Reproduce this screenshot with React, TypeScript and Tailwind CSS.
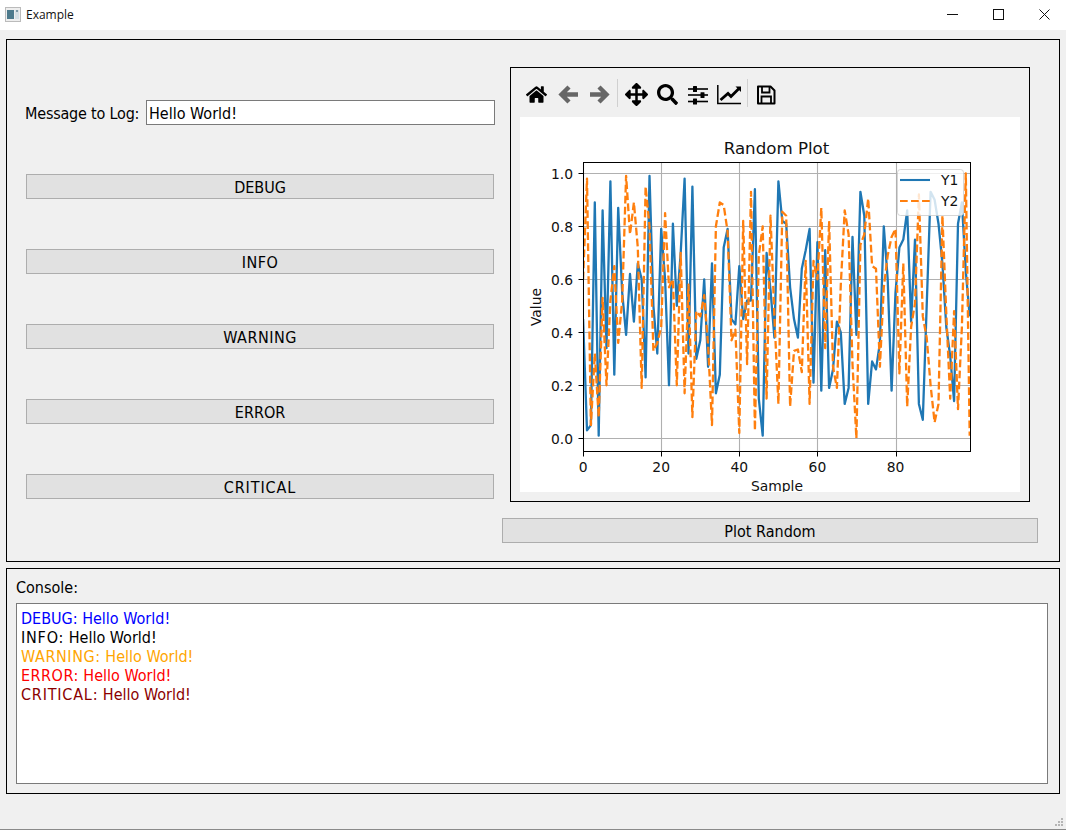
import React from "react";
import { FaHome, FaArrowsAlt, FaSearch } from "react-icons/fa";

const y1 = [0.45,0.03,0.05,0.89,0.01,0.86,0.34,0.97,0.24,0.87,0.55,0.39,0.62,0.44,0.66,0.6,0.23,0.99,0.5,0.32,0.79,0.6,0.2,0.81,0.5,0.7,0.98,0.32,0.95,0.3,0.37,0.6,0.27,0.66,0.17,0.24,0.72,0.79,0.45,0.43,0.65,0.45,0.52,0.52,0.94,0.15,0.01,0.7,0.56,0.38,0.97,0.82,0.81,0.57,0.45,0.38,0.64,0.71,0.79,0.21,0.74,0.18,0.71,0.19,0.26,0.44,0.4,0.13,0.19,0.76,0.39,0.93,0.84,0.13,0.29,0.26,0.36,0.8,0.6,0.18,0.55,0.72,0.75,0.86,0.44,0.75,0.13,0.07,0.5,0.93,0.9,0.81,0.66,0.42,0.31,0.14,0.81,0.89,0.63,0.46];
const y2 = [0.6,0.98,0.05,0.32,0.08,0.53,0.2,0.52,0.65,0.36,0.52,0.99,0.77,0.89,0.72,0.19,0.95,0.8,0.33,0.36,0.42,0.85,0.57,0.6,0.2,0.7,0.17,0.58,0.08,0.48,0.46,0.54,0.35,0.05,0.8,0.89,0.88,0.78,0.37,0.41,0.02,0.82,0.28,0.93,0.03,0.69,0.8,0.15,0.84,0.46,0.13,0.855,0.84,0.12,0.33,0.335,0.25,0.67,0.13,0.67,0.6,0.87,0.34,0.82,0.27,0.19,0.58,0.86,0.77,0.28,0.0,0.73,0.77,0.905,0.65,0.64,0.27,0.57,0.69,0.76,0.79,0.245,0.66,0.12,0.42,0.51,0.92,0.46,0.38,0.2,0.06,0.13,0.84,0.47,0.15,0.48,0.11,0.42,1.0,0.01];

const px = (i: number) => 63.1 + 3.905 * i;
const py = (v: number) => 321.3 - 265 * v;
const pts = (a: number[]) => a.map((v, i) => `${px(i).toFixed(1)},${py(v).toFixed(1)}`).join(" ");

function Plot() {
  const xt = [0, 20, 40, 60, 80];
  const yt = [0, 0.2, 0.4, 0.6, 0.8, 1];
  return (
    <svg width="500" height="375" viewBox="0 0 500 375" className="block" style={{ fontFamily: '"DejaVu Sans", sans-serif' }}>
      <defs>
        <clipPath id="ax"><rect x="63.5" y="45.5" width="387" height="289" /></clipPath>
      </defs>
      <rect width="500" height="375" fill="#fff" />
      <text x="256.5" y="37" fontSize="16.67" textAnchor="middle" fill="#111">Random Plot</text>
      {xt.map((t) => (
        <g key={t}>
          <line x1={Math.round(px(t)) + 0.5} x2={Math.round(px(t)) + 0.5} y1="45.5" y2="334.5" stroke="#b0b0b0" strokeWidth="1.1" />
          <line x1={Math.round(px(t)) + 0.5} x2={Math.round(px(t)) + 0.5} y1="334.5" y2="339.5" stroke="#000" strokeWidth="1" />
          <text x={px(t)} y="355" fontSize="13.89" textAnchor="middle" fill="#111">{t}</text>
        </g>
      ))}
      {yt.map((t) => (
        <g key={t}>
          <line x1="63.5" x2="450.5" y1={Math.round(py(t)) + 0.5} y2={Math.round(py(t)) + 0.5} stroke="#b0b0b0" strokeWidth="1.1" />
          <line x1="58.5" x2="63.5" y1={Math.round(py(t)) + 0.5} y2={Math.round(py(t)) + 0.5} stroke="#000" strokeWidth="1" />
          <text x="53" y={py(t) + 5.5} fontSize="13.89" textAnchor="end" fill="#111">{t.toFixed(1)}</text>
        </g>
      ))}
      <g clipPath="url(#ax)">
        <polyline points={pts(y1)} fill="none" stroke="#1f77b4" strokeWidth="2.3" strokeLinejoin="round" />
        <polyline points={pts(y2)} fill="none" stroke="#ff7f0e" strokeWidth="2.3" strokeDasharray="7.7 3.33" strokeLinejoin="round" />
      </g>
      <rect x="63.5" y="45.5" width="387" height="289" fill="none" stroke="#000" strokeWidth="1" />
      <rect x="377.5" y="52.5" width="66" height="46" rx="3" fill="#fff" fillOpacity="0.8" stroke="#ccc" strokeOpacity="0.8" strokeWidth="1" />
      <line x1="380" x2="410" y1="63" y2="63" stroke="#1f77b4" strokeWidth="2.08" />
      <line x1="380" x2="410" y1="84" y2="84" stroke="#ff7f0e" strokeWidth="2.08" strokeDasharray="7.7 3.33" />
      <text x="421" y="68" fontSize="13.89" fill="#111">Y1</text>
      <text x="421" y="89" fontSize="13.89" fill="#111">Y2</text>
      <text x="257" y="374" fontSize="13.89" textAnchor="middle" fill="#111">Sample</text>
      <text transform="translate(21 190) rotate(-90)" fontSize="13.89" textAnchor="middle" fill="#111">Value</text>
    </svg>
  );
}

function Btn({ label, className = "", labelClass = "" }: { label: string; className?: string; labelClass?: string }) {
  return (
    <button className={`h-[25px] border border-[#adadad] bg-[#e1e1e1] text-[16px] leading-[25px] text-black text-center ${className}`}>
      <span className={labelClass}>{label}</span>
    </button>
  );
}

function Tool({ children }: { children: React.ReactNode }) {
  return <div className="w-[31px] h-[31px] flex items-center justify-center">{children}</div>;
}

const font = { fontFamily: '"DejaVu Sans Condensed", "DejaVu Sans", sans-serif' };

export default function App() {
  return (
    <div className="w-[1066px] h-[830px] bg-[#f0f0f0] flex flex-col overflow-hidden text-black" style={font}>
      <div className="h-[30px] bg-white flex items-center shrink-0">
        <svg width="16" height="16" viewBox="0 0 16 16" className="ml-[5px]">
          <rect x="0.5" y="0.5" width="15" height="14" fill="#eee" stroke="#bbb" />
          <rect x="2" y="3" width="7" height="9" fill="#4d7a8c" />
          <rect x="10" y="3" width="4" height="9" fill="#d5dfe4" />
          <rect x="11" y="3" width="2" height="2" fill="#7d98a5" />
        </svg>
        <span className="ml-[5px] text-[12px] text-[#111]" style={{ fontFamily: '"Open Sans", sans-serif' }}>Example</span>
        <div className="ml-auto mr-[-1px] flex items-center pb-[1px]">
          <div className="w-[46px] h-[29px] flex items-center justify-center">
            <svg width="11" height="11" viewBox="0 0 11 11"><line x1="0" x2="11" y1="5.5" y2="5.5" stroke="#111" /></svg>
          </div>
          <div className="w-[46px] h-[29px] flex items-center justify-center">
            <svg width="11" height="11" viewBox="0 0 11 11"><rect x="0.5" y="0.5" width="10" height="10" fill="none" stroke="#111" /></svg>
          </div>
          <div className="w-[46px] h-[29px] flex items-center justify-center">
            <svg width="11" height="11" viewBox="0 0 11 11"><path d="M0.5 0.5L10.5 10.5M10.5 0.5L0.5 10.5" fill="none" stroke="#111" /></svg>
          </div>
        </div>
      </div>

      <div className="px-[6px] pt-[9px] flex flex-col gap-[6px]">
        <div className="h-[523px] border border-black flex">
          <div className="w-[495px] shrink-0 pt-[60px] pl-[18px] flex flex-col">
            <div className="flex items-center h-[25px]">
              <span className="text-[16px] leading-[25px] pt-[2px] w-[121px] shrink-0 tracking-[-0.2px]">Message to Log:</span>
              <input readOnly value="Hello World!" className="w-[349px] h-[25px] border border-[#7a7a7a] bg-white px-[2px] pt-[2px] text-[16px] text-black outline-none" />
            </div>
            <div className="mt-[49px] ml-[1px] flex flex-col gap-[50px] w-[468px]">
              <Btn label="DEBUG" />
              <Btn label="INFO" labelClass="tracking-[0.5px]" />
              <Btn label="WARNING" labelClass="tracking-[0.5px]" />
              <Btn label="ERROR" />
              <Btn label="CRITICAL" labelClass="tracking-[0.9px]" />
            </div>
          </div>
          <div className="flex flex-col pt-[27px]">
            <div className="ml-[8px] w-[520px] h-[435px] border border-black flex flex-col">
              <div className="h-[49px] pl-[11px] pt-[11px] flex items-start shrink-0">
                <Tool><FaHome size={21} color="#000" className="-translate-x-[1px]" /></Tool>
                <Tool>
                  <svg width="21" height="21" viewBox="0 0 21 21">
                    <path d="M11 3L3.5 10.5L11 18M5 10.5H20" fill="none" stroke="#666" strokeWidth="4.4" />
                  </svg>
                </Tool>
                <Tool>
                  <svg width="21" height="21" viewBox="0 0 21 21">
                    <path d="M10 3L17.5 10.5L10 18M16 10.5H1" fill="none" stroke="#666" strokeWidth="4.4" />
                  </svg>
                </Tool>
                <div className="w-[6px] h-[31px] pl-[2px]"><div className="w-px h-[28px] bg-[#d0d0d0]" /></div>
                <Tool><FaArrowsAlt size={23} color="#000" /></Tool>
                <Tool><FaSearch size={21} color="#000" /></Tool>
                <Tool>
                  <svg width="22" height="20" viewBox="0 0 22 20" className="-translate-x-[1px]">
                    <g fill="#000">
                      <rect x="1" y="3.2" width="20" height="1.6" />
                      <rect x="1" y="9.2" width="20" height="1.6" />
                      <rect x="1" y="15.7" width="20" height="1.6" />
                      <rect x="6" y="1" width="4" height="6" rx="0.5" />
                      <rect x="13.5" y="7.3" width="4" height="5.6" rx="0.5" />
                      <rect x="6" y="13.5" width="4" height="6" rx="0.5" />
                    </g>
                  </svg>
                </Tool>
                <Tool>
                  <svg width="24" height="21" viewBox="0 0 24 21" className="-translate-x-[1px]">
                    <path d="M0.8 1V19.5H24" fill="none" stroke="#000" strokeWidth="1.5" />
                    <path d="M3.5 16L11 9.5L14 12.5L22 4.5" fill="none" stroke="#000" strokeWidth="2.8" />
                    <path d="M18.5 2.5H24V8Z" fill="#000" />
                  </svg>
                </Tool>
                <div className="w-[7px] h-[31px] pl-[2px]"><div className="w-px h-[28px] bg-[#d0d0d0]" /></div>
                <Tool>
                  <svg width="20" height="20" viewBox="0 0 20 20" className="-translate-x-[2px]">
                    <path d="M2 1.5H14.5L18.5 5.5V18.5H2Z" fill="none" stroke="#000" strokeWidth="2" strokeLinejoin="round" />
                    <path d="M6 2V7.5H13.5V2" fill="none" stroke="#000" strokeWidth="1.8" />
                    <path d="M5.5 18V11.5H15V18" fill="none" stroke="#000" strokeWidth="1.8" />
                  </svg>
                </Tool>
              </div>
              <div className="ml-[9px]"><Plot /></div>
            </div>
            <Btn label="Plot Random" className="mt-[16px] w-[536px]" />
          </div>
        </div>

        <div className="h-[226px] border border-black px-[9px] flex flex-col">
          <div className="h-[34px] text-[16px] leading-[38px] shrink-0">Console:</div>
          <div className="w-[1032px] h-[181px] border border-[#7a7a7a] bg-white px-[4px] pt-[5px] text-[16px] leading-[19px]">
            <div className="text-[#0000ff]">DEBUG: Hello World!</div>
            <div className="text-black"><span className="tracking-[0.8px]">INFO:</span> Hello World!</div>
            <div className="text-[#ffa500]"><span className="tracking-[0.6px]">WARNING:</span> Hello World!</div>
            <div className="text-[#ff0000]"><span className="tracking-[0.5px]">ERROR:</span> Hello World!</div>
            <div className="text-[#8b0000]"><span className="tracking-[0.8px]">CRITICAL:</span> Hello World!</div>
          </div>
        </div>
      </div>

      <div className="mt-auto h-[14px] border-b border-[#8a8a8a] flex justify-end items-end pr-[2px] pb-[1px]">
        <svg width="10" height="10" viewBox="0 0 10 10">
          <g fill="#b5b5b5">
            <rect x="7" y="0" width="2" height="2" />
            <rect x="4" y="3" width="2" height="2" />
            <rect x="7" y="3" width="2" height="2" />
            <rect x="1" y="6" width="2" height="2" />
            <rect x="4" y="6" width="2" height="2" />
            <rect x="7" y="6" width="2" height="2" />
          </g>
        </svg>
      </div>
    </div>
  );
}
